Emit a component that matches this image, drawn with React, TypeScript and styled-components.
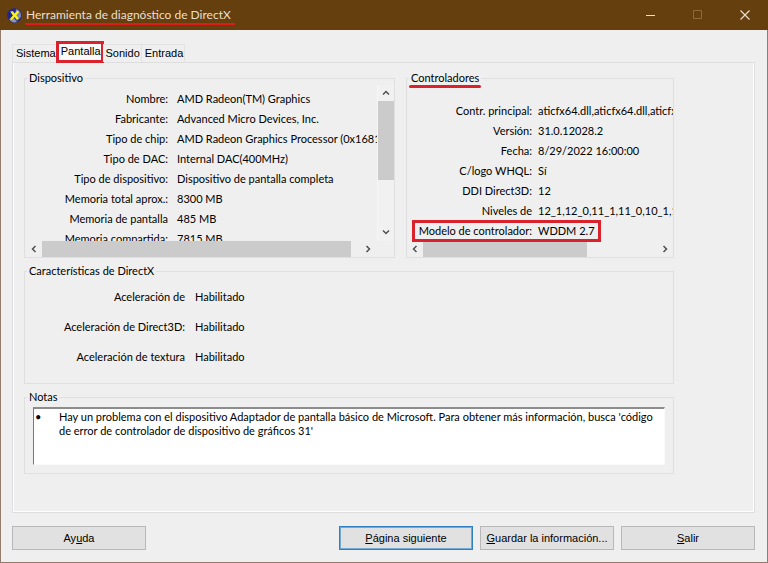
import React, { useState } from "react";
import styled, { createGlobalStyle } from "styled-components";

const RED = "#d9222c";
const BODY_FONT = 'Lato, "Open Sans", sans-serif';
const UI_FONT = '"Liberation Sans", sans-serif';

const GlobalStyle = createGlobalStyle`
  *, *::after { box-sizing: border-box; }
  body { margin: 0; background: #efefef; color: #000; font: 11px/14px ${BODY_FONT}; }
  button { font: inherit; color: inherit; }
`;

const Window = styled.div`
  display: flex;
  flex-direction: column;
  min-height: 100vh;
  border: 1px solid #917c6c;
  border-top: 0;
  background: #efefef;
`;

const TitleBar = styled.header`
  display: flex;
  align-items: center;
  height: 30px;
  padding-left: 7px;
  margin: 0 -1px;
  background: #663f0e;
  color: #eadfce;
`;

const Title = styled.h1`
  position: relative;
  margin: 0 auto 0 4px;
  font: 12px/20px ${BODY_FONT};
  white-space: nowrap;
  &::after {
    content: "";
    position: absolute;
    inset: auto -4px 0 -1px;
    height: 2px;
    border-radius: 1px;
    background: #e01b1b;
  }
`;

const CaptionButton = styled.button`
  display: grid;
  place-items: center;
  width: 47px;
  height: 30px;
  padding: 0;
  border: 0;
  background: none;
  color: #eadfce;
  &:disabled { color: #916c38; }
`;

const Body = styled.main`
  display: flex;
  flex: 1;
  flex-direction: column;
  padding: 12px 12px 12px 11px;
`;

const TabList = styled.div`
  display: flex;
  align-items: flex-end;
  height: 20px;
`;

const Tab = styled.button<{ $active?: boolean }>`
  position: relative;
  height: ${(p) => (p.$active ? 20 : 18)}px;
  padding: 0 1px ${(p) => (p.$active ? 3 : 1)}px 3px;
  border: 1px solid #e2e2e2;
  border-width: 1px 1px 0 0;
  background: ${(p) => (p.$active ? "#fafafa" : "#efefef")};
  font: 11px/16px ${UI_FONT};
  white-space: nowrap;
  &:first-child { border-left-width: 1px; }
  &::after {
    content: "";
    display: ${(p) => (p.$active ? "block" : "none")};
    position: absolute;
    inset: -2px -2px -1px -2px;
    border: 3px solid ${RED};
  }
`;

const TabPanel = styled.section`
  display: flex;
  flex: 1;
  flex-direction: column;
  gap: 6px;
  padding: 8px 80px 16px 11px;
  border: 1px solid #dedede;
  box-shadow: inset 1px 0 #fff, inset -1px -1px #fff;
`;

const Columns = styled.div`
  display: grid;
  grid-template-columns: 371fr 268fr;
  gap: 11px;
`;

const Group = styled.fieldset`
  display: flex;
  flex-direction: column;
  min-width: 0;
  margin: 0;
  padding: 0;
  border: 1px solid #dfdfdf;
`;

const Legend = styled.legend<{ $marked?: boolean }>`
  position: relative;
  height: 14px;
  margin-left: 2px;
  padding: 0 2px;
  &::after {
    content: "";
    display: ${(p) => (p.$marked ? "block" : "none")};
    position: absolute;
    inset: auto 0 -3px 0;
    height: 3px;
    border-radius: 2px;
    background: ${RED};
  }
`;

const ScrollFrame = styled.div`
  display: grid;
  grid-template-columns: minmax(0, 1fr) auto;
`;

const Viewport = styled.dl<{ $top: number; $open?: boolean }>`
  height: 156px;
  margin: 0;
  padding-top: ${(p) => p.$top}px;
  overflow-x: clip;
  overflow-y: ${(p) => (p.$open ? "visible" : "clip")};
`;

const Field = styled.div<{ $label: number; $gap: number; $marked?: boolean }>`
  position: relative;
  display: grid;
  grid-template-columns: ${(p) => p.$label}px max-content;
  column-gap: ${(p) => p.$gap}px;
  height: 20px;
  line-height: 20px;
  white-space: nowrap;
  dt { text-align: right; }
  dd { margin: 0; }
  &::after {
    content: "";
    display: ${(p) => (p.$marked ? "block" : "none")};
    position: absolute;
    inset: -1px auto -1px 5px;
    width: 189px;
    border: 3px solid ${RED};
  }
`;

const FeatureList = styled.dl`
  display: flex;
  flex-direction: column;
  gap: 10px;
  margin: 0;
  padding: 9px 0 16px;
`;

const VerticalBar = styled.div`
  display: grid;
  grid-template-rows: 16px 79px 1fr 18px;
  width: 17px;
  background: #f1f1f1;
  border-left: 1px solid #f6f6f6;
`;

const HorizontalBar = styled.div<{ $columns: string }>`
  display: grid;
  grid-template-columns: ${(p) => p.$columns};
  height: 16px;
`;

const Thumb = styled.div`
  background: #cbcbcb;
`;

const ArrowButton = styled.button`
  display: grid;
  place-items: center;
  min-width: 0;
  padding: 0;
  border: 0;
  background: none;
  color: #505050;
`;

const Notes = styled.textarea`
  display: block;
  height: 58px;
  margin: 3px 8px 8px;
  padding: 1px 4px 0 25px;
  border: 1px solid #fbfbfb;
  border-top: 2px solid #8c8c8c;
  border-left: 1px solid #777;
  border-radius: 0;
  outline: 0;
  resize: none;
  overflow: hidden;
  background: #fff;
  color: #000;
  font: 11px/14px ${BODY_FONT};
  text-indent: -24px;
  tab-size: 24px;
`;

const Footer = styled.footer`
  display: grid;
  grid-template-columns: 134px 1fr 134px 134px 134px;
  column-gap: 7px;
  margin-top: 13px;
`;

const PushButton = styled.button<{ $primary?: boolean }>`
  height: 24px;
  padding: 0;
  border: 1px solid ${(p) => (p.$primary ? "#2f7fc4" : "#b8b8b8")};
  box-shadow: ${(p) => (p.$primary ? "inset 0 0 0 1px #72a9d6" : "none")};
  background: #e1e1e1;
  font: 11px/16px ${UI_FONT};
  white-space: nowrap;
  &:nth-child(2) { grid-column: 3; }
`;

const AppIcon = () => (
  <svg width="15" height="15" viewBox="0 0 15 15" aria-hidden="true">
    <circle cx="7.5" cy="7.5" r="7.3" fill="#24268c" />
    <path d="M9 1a7 7 0 0 1 5 8l-4 4-2-4z" fill="#7b84bd" />
    <path d="M2 11a7 7 0 0 0 8 3L7 10z" fill="#8f95b5" />
    <path d="M3.2 3.5 6 3.2 7.7 5.6 10.4 2.6 12.2 4 9.3 7.2 12 10.4 9.7 11.4 7.6 9 4.7 11.9 3 10.8 5.9 7.4z" fill="#f8f222" />
  </svg>
);

const turns = { left: 0, up: 90, right: 180, down: 270 };

const Arrow = ({ to, label }: { to: keyof typeof turns; label: string }) => (
  <ArrowButton type="button" aria-label={label}>
    <svg width="8" height="8" viewBox="0 0 8 8" fill="none" stroke="currentColor" strokeWidth="1.5">
      <path d="M5.5 1 2.5 4l3 3" transform={`rotate(${turns[to]} 4 4)`} />
    </svg>
  </ArrowButton>
);

const device = [
  ["Nombre:", "AMD Radeon(TM) Graphics"],
  ["Fabricante:", "Advanced Micro Devices, Inc."],
  ["Tipo de chip:", "AMD Radeon Graphics Processor (0x1681)"],
  ["Tipo de DAC:", "Internal DAC(400MHz)"],
  ["Tipo de dispositivo:", "Dispositivo de pantalla completa"],
  ["Memoria total aprox.:", "8300 MB"],
  ["Memoria de pantalla", "485 MB"],
  ["Memoria compartida:", "7815 MB"],
];

const drivers = [
  ["Contr. principal:", "aticfx64.dll,aticfx64.dll,aticfx64.dll"],
  ["Versión:", "31.0.12028.2"],
  ["Fecha:", "8/29/2022 16:00:00"],
  ["C/logo WHQL:", "Sí"],
  ["DDI Direct3D:", "12"],
  ["Niveles de", "12_1,12_0,11_1,11_0,10_1,10_0"],
  ["Modelo de controlador:", "WDDM 2.7"],
];

const features = ["Aceleración de", "Aceleración de Direct3D:", "Aceleración de textura"];

const note =
  "•\tHay un problema con el dispositivo Adaptador de pantalla básico de Microsoft. Para obtener más información, busca 'código de error de controlador de dispositivo de gráficos 31'";

export default function App() {
  const [tab, setTab] = useState("Pantalla");
  return (
    <>
      <GlobalStyle />
      <Window>
        <TitleBar>
          <AppIcon />
          <Title>Herramienta de diagnóstico de DirectX</Title>
          <CaptionButton type="button" aria-label="Minimizar">
            <svg width="10" height="10" stroke="currentColor"><path d="M0 5.5h9" /></svg>
          </CaptionButton>
          <CaptionButton type="button" aria-label="Maximizar" disabled>
            <svg width="10" height="10" stroke="currentColor" fill="none"><path d="M.5.5h8v8h-8z" /></svg>
          </CaptionButton>
          <CaptionButton type="button" aria-label="Cerrar">
            <svg width="10" height="10" stroke="currentColor" strokeWidth="1.2"><path d="m.5.5 9 9m0-9-9 9" /></svg>
          </CaptionButton>
        </TitleBar>
        <Body>
          <TabList role="tablist">
            {["Sistema", "Pantalla", "Sonido", "Entrada"].map((name) => (
              <Tab key={name} type="button" role="tab" aria-selected={tab === name} $active={tab === name} onClick={() => setTab(name)}>
                {name}
              </Tab>
            ))}
          </TabList>
          <TabPanel role="tabpanel" aria-label={tab}>
            <Columns>
              <Group>
                <Legend>Dispositivo</Legend>
                <ScrollFrame>
                  <Viewport $top={4}>
                    {device.map(([name, value]) => (
                      <Field key={name} $label={143} $gap={9}><dt>{name}</dt><dd>{value}</dd></Field>
                    ))}
                  </Viewport>
                  <VerticalBar>
                    <Arrow to="up" label="Subir" />
                    <Thumb />
                    <span />
                    <Arrow to="down" label="Bajar" />
                  </VerticalBar>
                  <HorizontalBar $columns="17px 311fr 9fr 17px">
                    <Arrow to="left" label="Izquierda" />
                    <Thumb />
                    <span />
                    <Arrow to="right" label="Derecha" />
                  </HorizontalBar>
                </ScrollFrame>
              </Group>
              <Group>
                <Legend $marked>Controladores</Legend>
                <Viewport $top={16} $open>
                  {drivers.map(([name, value]) => (
                    <Field key={name} $label={125} $gap={6} $marked={value === "WDDM 2.7"}><dt>{name}</dt><dd>{value}</dd></Field>
                  ))}
                </Viewport>
                <HorizontalBar $columns="16px 163fr 69fr 17px">
                  <Arrow to="left" label="Izquierda" />
                  <Thumb />
                  <span />
                  <Arrow to="right" label="Derecha" />
                </HorizontalBar>
              </Group>
            </Columns>
            <Group>
              <Legend>Características de DirectX</Legend>
              <FeatureList>
                {features.map((name) => (
                  <Field key={name} $label={160} $gap={10}><dt>{name}</dt><dd>Habilitado</dd></Field>
                ))}
              </FeatureList>
            </Group>
            <Group>
              <Legend id="notes-title">Notas</Legend>
              <Notes aria-labelledby="notes-title" readOnly value={note} />
            </Group>
          </TabPanel>
          <Footer>
            <PushButton type="button">Ay<u>u</u>da</PushButton>
            <PushButton type="button" $primary><u>P</u>ágina siguiente</PushButton>
            <PushButton type="button"><u>G</u>uardar la información...</PushButton>
            <PushButton type="button"><u>S</u>alir</PushButton>
          </Footer>
        </Body>
      </Window>
    </>
  );
}
